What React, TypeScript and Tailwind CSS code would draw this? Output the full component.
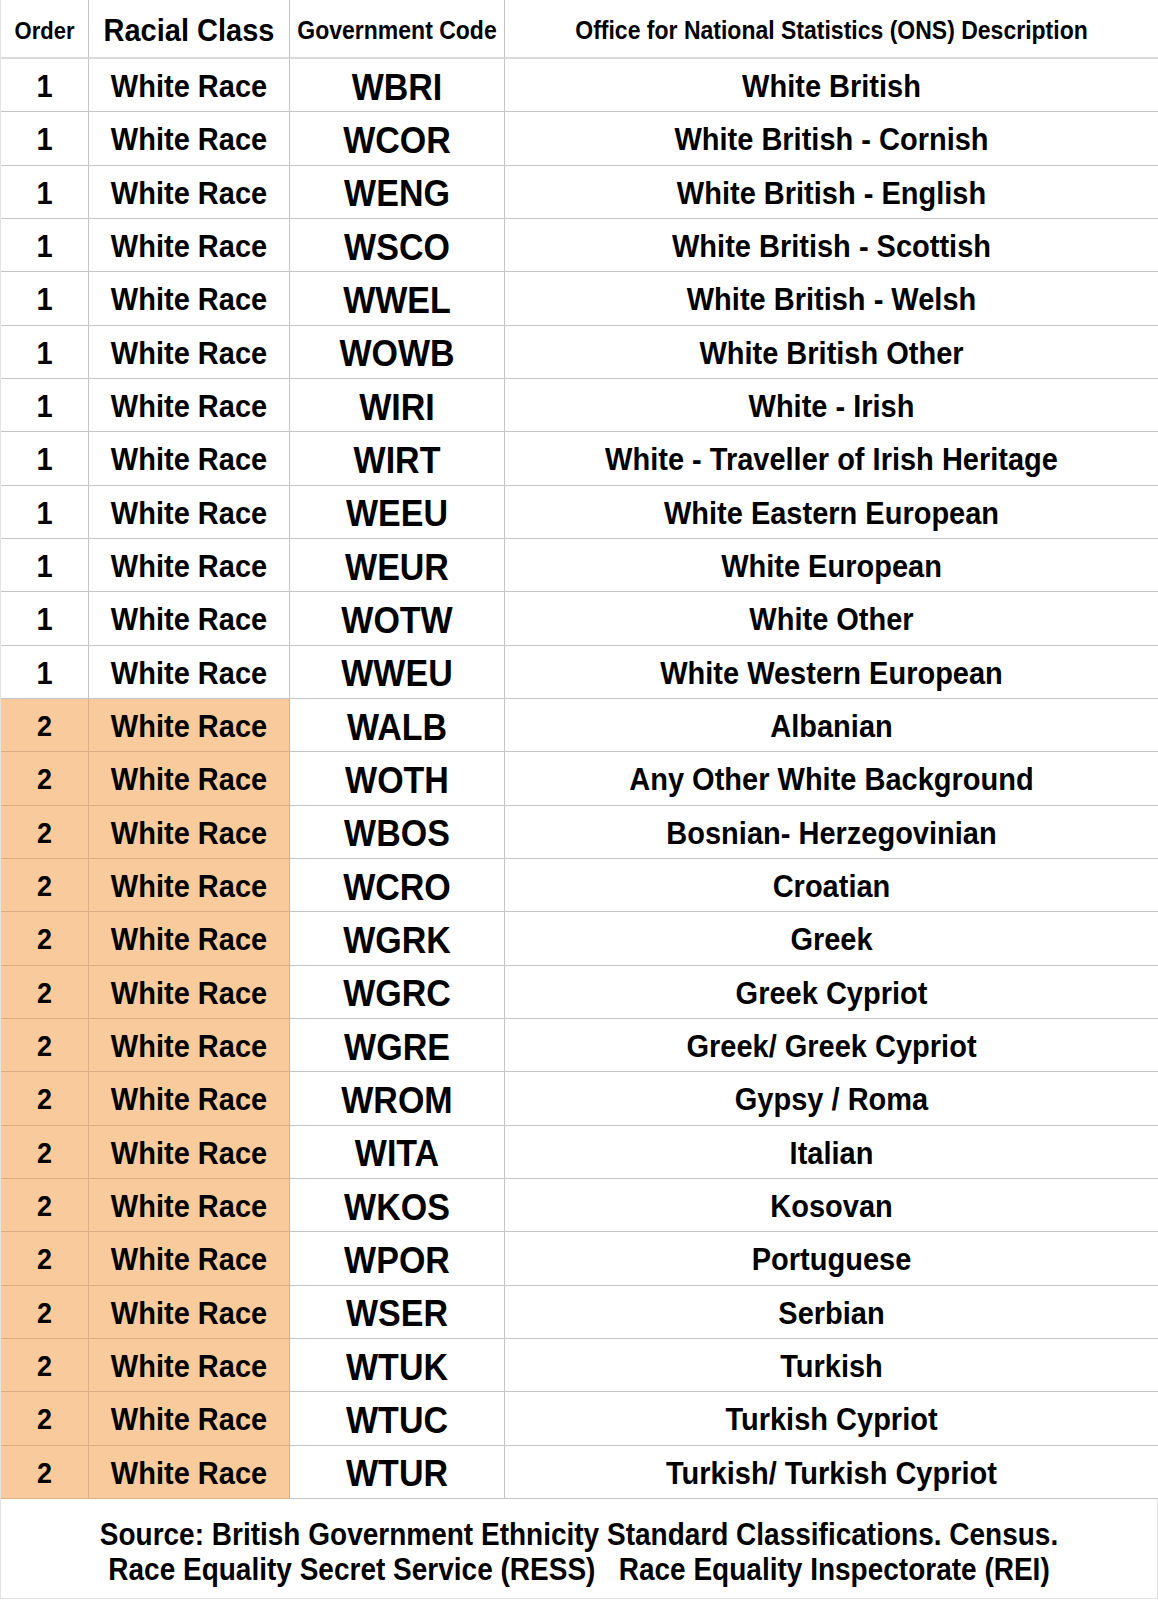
import React from 'react';

type Row = { order: number; code: string; desc: string };

const rows: Row[] = [
  { order: 1, code: 'WBRI', desc: 'White British' },
  { order: 1, code: 'WCOR', desc: 'White British - Cornish' },
  { order: 1, code: 'WENG', desc: 'White British - English' },
  { order: 1, code: 'WSCO', desc: 'White British - Scottish' },
  { order: 1, code: 'WWEL', desc: 'White British - Welsh' },
  { order: 1, code: 'WOWB', desc: 'White British Other' },
  { order: 1, code: 'WIRI', desc: 'White - Irish' },
  { order: 1, code: 'WIRT', desc: 'White - Traveller of Irish Heritage' },
  { order: 1, code: 'WEEU', desc: 'White Eastern European' },
  { order: 1, code: 'WEUR', desc: 'White European' },
  { order: 1, code: 'WOTW', desc: 'White Other' },
  { order: 1, code: 'WWEU', desc: 'White Western European' },
  { order: 2, code: 'WALB', desc: 'Albanian' },
  { order: 2, code: 'WOTH', desc: 'Any Other White Background' },
  { order: 2, code: 'WBOS', desc: 'Bosnian- Herzegovinian' },
  { order: 2, code: 'WCRO', desc: 'Croatian' },
  { order: 2, code: 'WGRK', desc: 'Greek' },
  { order: 2, code: 'WGRC', desc: 'Greek Cypriot' },
  { order: 2, code: 'WGRE', desc: 'Greek/ Greek Cypriot' },
  { order: 2, code: 'WROM', desc: 'Gypsy / Roma' },
  { order: 2, code: 'WITA', desc: 'Italian' },
  { order: 2, code: 'WKOS', desc: 'Kosovan' },
  { order: 2, code: 'WPOR', desc: 'Portuguese' },
  { order: 2, code: 'WSER', desc: 'Serbian' },
  { order: 2, code: 'WTUK', desc: 'Turkish' },
  { order: 2, code: 'WTUC', desc: 'Turkish Cypriot' },
  { order: 2, code: 'WTUR', desc: 'Turkish/ Turkish Cypriot' },
];

const cell = 'flex items-center justify-center border-r border-b leading-none pt-[3px]';
const head = 'flex items-center justify-center border-r border-b-2 border-[#c4c4c4] border-b-[#dadada] leading-none pt-[4px]';

// the sheet's text is drawn a little taller than Arial's proportions
const T: React.FC<{ children: React.ReactNode }> = ({ children }) => (
  <span className="inline-block scale-y-[1.1] whitespace-pre">{children}</span>
);

const App: React.FC = () => {
  return (
    <div className="w-[1158px] bg-white text-black font-['Liberation_Sans',Arial,sans-serif] font-bold">
      {/* header */}
      <div className="grid grid-cols-[88px_201px_215px_654px] h-[59px] border-l border-[#e3e3e3]">
        <div className={`${head} text-[22px]`}><T>Order</T></div>
        <div className={`${head} text-[29px]`}><T>Racial Class</T></div>
        <div className={`${head} text-[23px]`}><T>Government Code</T></div>
        <div className={`${head} text-[23px]`}>
          <T>Office for National Statistics (ONS) Description</T>
        </div>
      </div>

      {rows.map((r) => {
        const orange = r.order === 2;
        const hl = orange ? 'bg-[#f9cb9c] border-[#dcae85]' : 'border-[#c4c4c4]';
        return (
          <div
            key={r.code}
            className="grid grid-cols-[88px_201px_215px_654px] h-[53.33px] border-l border-[#e3e3e3]"
          >
            <div className={`${cell} ${hl} ${orange ? 'text-[27px]' : 'text-[29px]'}`}><T>{r.order}</T></div>
            <div className={`${cell} ${hl} text-[29px]`}><T>White Race</T></div>
            <div className={`${cell} border-[#c4c4c4] text-[34px]`}><T>{r.code}</T></div>
            <div className={`${cell} border-[#c4c4c4] text-[29px]`}><T>{r.desc}</T></div>
          </div>
        );
      })}

      <div className="h-[100px] border border-t-0 border-[#e3e3e3] flex flex-col items-center justify-center pt-2 text-[28px] leading-[35px]">
        <p><T>Source: British Government Ethnicity Standard Classifications. Census.</T></p>
        <p><T>Race Equality Secret Service (RESS)   Race Equality Inspectorate (REI)</T></p>
      </div>
    </div>
  );
};

export default App;
